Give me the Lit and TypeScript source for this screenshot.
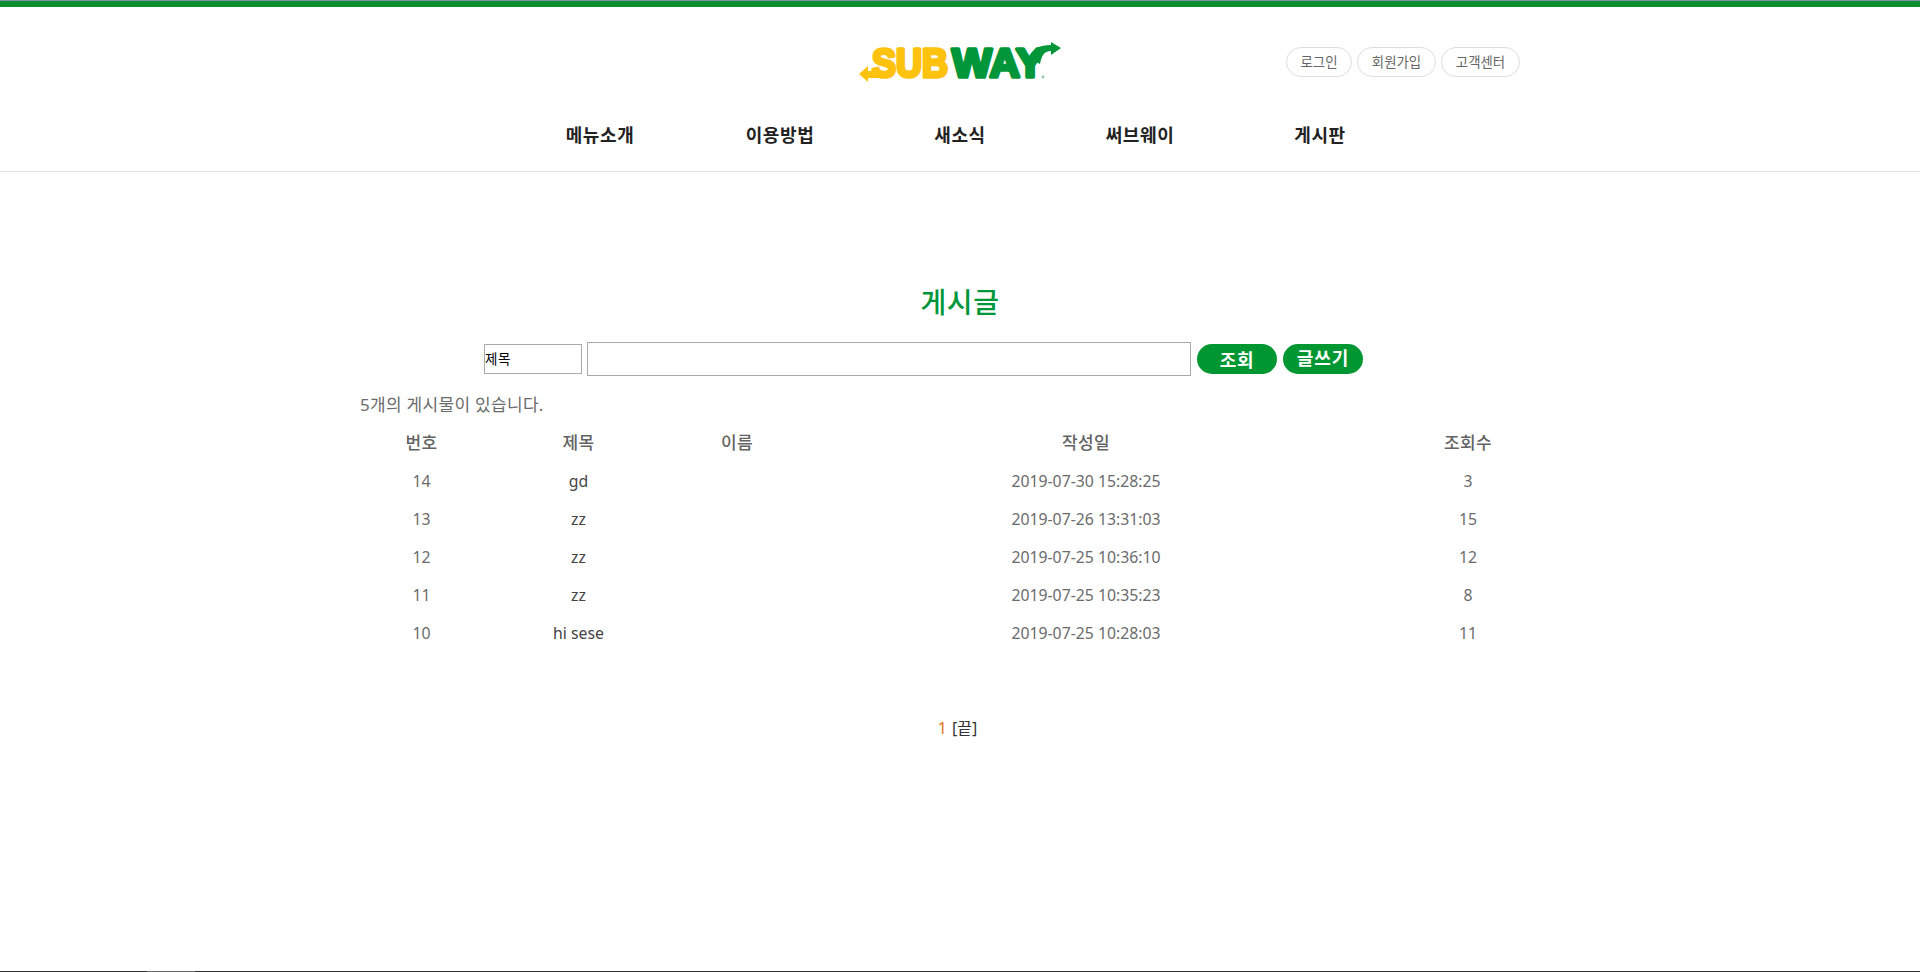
import { LitElement, html, css } from "lit";
import { customElement } from "lit/decorators.js";

const rows = [
  ["14", "gd", "", "2019-07-30 15:28:25", "3"],
  ["13", "zz", "", "2019-07-26 13:31:03", "15"],
  ["12", "zz", "", "2019-07-25 10:36:10", "12"],
  ["11", "zz", "", "2019-07-25 10:35:23", "8"],
  ["10", "hi sese", "", "2019-07-25 10:28:03", "11"],
];

@customElement("app-root")
export class AppRoot extends LitElement {
  static styles = css`
    :host {
      display: flex;
      flex-direction: column;
      min-height: 972px;
      background: #fff;
      font-family: "Noto Sans", "Noto Sans CJK KR", sans-serif;
      color: #666;
      font-size: 16px;
    }
    .frame { height: 1px; background: #7d93ad; }
    .bar { height: 6px; background: #0a8f2c; }
    .head {
      display: grid;
      grid-template-columns: 1fr auto 1fr;
      align-items: center;
      height: 110px;
    }
    .logo { display: block; width: 204px; height: 56px; }
    .logo text {
      font-family: "Liberation Sans", sans-serif;
      font-weight: 700;
      font-size: 40px;
      stroke-width: 3.6;
      stroke-linejoin: round;
    }
    .util { display: flex; gap: 5px; margin-left: 224px; }
    .pill {
      box-sizing: border-box;
      height: 30px;
      line-height: 28px;
      border: 1px solid #ddd;
      border-radius: 15px;
      font-size: 13.4px;
      color: #666;
      text-align: center;
      width: 79px;
    }
    .pill.short { width: 66px; }
    nav {
      display: flex;
      justify-content: center;
      height: 55px;
      box-sizing: border-box;
      border-bottom: 1px solid #e2e2e2;
    }
    nav a {
      width: 180px;
      text-align: center;
      font-size: 18px;
      font-weight: 700;
      letter-spacing: 0.6px;
      line-height: 36px;
      color: #222;
    }
    main { width: 1204px; margin-left: 360px; }
    h1 {
      margin: 110px 0 0;
      width: 1200px;
      text-align: center;
      font-size: 28px;
      letter-spacing: 0.5px;
      line-height: 40px;
      font-weight: 500;
      color: #009639;
    }
    .search {
      display: flex;
      align-items: center;
      height: 34px;
      margin: 20px 0 0 124px;
    }
    select {
      appearance: none;
      box-sizing: border-box;
      width: 98px;
      height: 30px;
      border: 1px solid #a9a9a9;
      border-radius: 0;
      background: #fff;
      color: #000;
      font: 13.5px "Noto Sans CJK KR", sans-serif;
      letter-spacing: 0.5px;
      padding: 0 0 3px;
      margin-right: 5px;
    }
    input {
      box-sizing: border-box;
      width: 604px;
      height: 34px;
      border: 1px solid #a9a9a9;
      padding: 0;
      margin-right: 6px;
    }
    .btn {
      box-sizing: border-box;
      width: 80px;
      height: 30px;
      border: 0;
      border-radius: 15px;
      background: #009632;
      color: #fff;
      font: 700 18px "Noto Sans CJK KR", sans-serif;
      letter-spacing: 0.6px;
      line-height: 30px;
      padding: 0;
      text-align: center;
    }
    .btn.write { margin-left: 6px; padding-bottom: 4px; line-height: 26px; letter-spacing: 1px; }
    .count { margin: 17px 0 0; line-height: 24px; font-size: 17px; letter-spacing: 0.3px; color: #6b6b6b; }
    table { border-collapse: collapse; table-layout: fixed; width: 1204px; margin-top: 7px; }
    .c1 { width: 123px; }
    .c2 { width: 191px; }
    .c3 { width: 126px; }
    .c4 { width: 572px; }
    .c5 { width: 192px; }
    th, td { height: 38px; padding: 0; text-align: center; font-size: 15.8px; color: #6b6b6b; line-height: 24px; }
    th { font-size: 17px; letter-spacing: 0.3px; font-weight: 500; color: #636363; }
    td.title { color: #444; }
    .pager { margin-top: 64px; width: 1204px; text-align: center; line-height: 24px; color: #333; padding-right: 9px; box-sizing: border-box; }
    .pager .cur { color: #e8701a; margin-right: 1px; }
    .foot { margin-top: auto; display: flex; height: 1px; background: #333; }
    .foot i { display: block; margin-left: 147px; width: 48px; background: #666; }
  `;

  render() {
    return html`
      <div class="frame"></div>
      <div class="bar"></div>
      <header>
        <div class="head">
          <span></span>
          <svg class="logo" viewBox="858 34 204 56" aria-label="SUBWAY">
            <polygon fill="#ffc20e" points="859,74 868,66 868,71 890,71 890,78 868,78 868,82" />
            <text x="872" y="76.5" fill="#ffc20e" stroke="#ffc20e" textLength="76" lengthAdjust="spacingAndGlyphs">SUB</text>
            <text x="952" y="76.5" fill="#009639" stroke="#009639" textLength="92" lengthAdjust="spacingAndGlyphs">WAY</text>
            <path fill="#009639" d="M1028 58 C1033 48 1040 45 1051 45 L1051 42 L1061 48 L1051 55 L1051 51 C1045 51 1042 54 1040 64 Z" />
            <circle cx="1043" cy="77" r="1.4" fill="#8cc9a0" />
          </svg>
          <div class="util">
            <a class="pill short">로그인</a>
            <a class="pill">회원가입</a>
            <a class="pill">고객센터</a>
          </div>
        </div>
        <nav>
          <a>메뉴소개</a><a>이용방법</a><a>새소식</a><a>써브웨이</a><a>게시판</a>
        </nav>
      </header>
      <main>
        <h1>게시글</h1>
        <form class="search" @submit=${(e: Event) => e.preventDefault()}>
          <select><option>제목</option></select>
          <input type="text" />
          <button class="btn">조회</button>
          <a class="btn write">글쓰기</a>
        </form>
        <p class="count">5개의 게시물이 있습니다.</p>
        <table>
          <colgroup>
            <col class="c1" /><col class="c2" /><col class="c3" /><col class="c4" /><col class="c5" />
          </colgroup>
          <thead>
            <tr><th>번호</th><th>제목</th><th>이름</th><th>작성일</th><th>조회수</th></tr>
          </thead>
          <tbody>
            ${rows.map(
              (r) => html`<tr>
                <td>${r[0]}</td><td class="title">${r[1]}</td><td>${r[2]}</td><td>${r[3]}</td><td>${r[4]}</td>
              </tr>`
            )}
          </tbody>
        </table>
        <div class="pager"><span class="cur">1</span> [끝]</div>
      </main>
      <div class="foot"><i></i></div>
    `;
  }
}
